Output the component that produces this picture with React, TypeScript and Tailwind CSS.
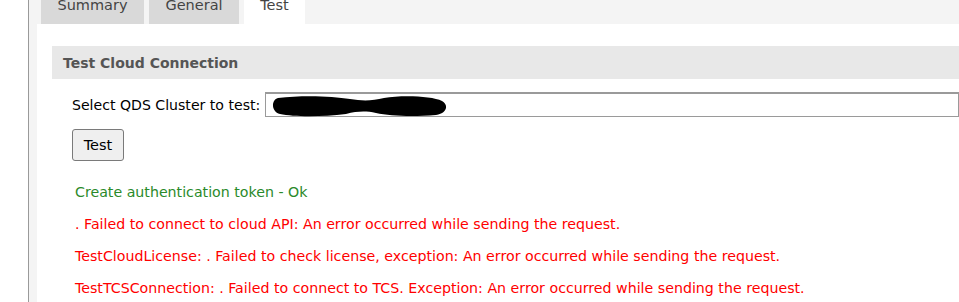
import React from 'react';

const tabs = [
  { label: 'Summary', width: 'w-[103px]', active: false },
  { label: 'General', width: 'w-[90px]', active: false },
  { label: 'Test', width: 'w-[61px]', active: true },
];

const results = [
  { ok: true, text: 'Create authentication token - Ok' },
  { ok: false, text: '. Failed to connect to cloud API: An error occurred while sending the request.' },
  { ok: false, text: 'TestCloudLicense: . Failed to check license, exception: An error occurred while sending the request.' },
  { ok: false, text: 'TestTCSConnection: . Failed to connect to TCS. Exception: An error occurred while sending the request.' },
];

function Redaction() {
  return (
    <svg width="176" height="22" viewBox="0 0 176 22" className="absolute left-[6px] top-[1px]">
      <path
        d="M6 3 C30 0 60 1 78 4 C90 6 100 6 112 3 C130 0 160 1 170 6 C177 10 175 18 164 20 C140 22 118 21 104 18 C94 16 86 16 74 19 C50 22 22 22 8 19 C-1 17 -1 5 6 3 Z"
        fill="#000"
      />
    </svg>
  );
}

export default function App() {
  return (
    <div className="flex h-[302px] w-full overflow-hidden bg-white font-['DejaVu_Sans',Verdana,sans-serif]">
      <div className="w-[28px] shrink-0 bg-white" />
      <div className="flex min-w-0 flex-1 flex-col border-l border-[#9a9a9a] bg-[#f4f4f4] pl-[8px]">
        <div className="-mt-[10px] flex h-[34px] shrink-0 items-stretch gap-[5px] pl-[4px]">
          {tabs.map((t) => (
            <div
              key={t.label}
              className={`${t.width} flex items-start justify-center pt-[5px] text-[14.5px] text-[#444] ${
                t.active ? 'bg-white' : 'bg-[#d9d9d9]'
              }`}
            >
              {t.label}
            </div>
          ))}
        </div>
        <div className="flex flex-1 flex-col bg-white pl-[15px] pt-[22px]">
          <div className="flex h-[33px] items-center bg-[#e8e8e8] pl-[11px] pt-[2px] text-[14px] font-bold text-[#555]">
            Test Cloud Connection
          </div>
          <div className="flex items-center pl-[20px] pt-[13px]">
            <span className="w-[193px] shrink-0 pt-[2px] text-[14.1px] text-black">Select QDS Cluster to test:</span>
            <div className="relative h-[25px] flex-1 border border-t-2 border-[#9a9a9a] bg-white">
              <Redaction />
            </div>
          </div>
          <div className="pl-[20px] pt-[12px]">
            <button className="h-[32px] w-[52px] rounded-[3px] border border-[#7a7a7a] bg-[#efefef] pt-[2px] text-[14.5px] text-black">
              Test
            </button>
          </div>
          <div className="flex flex-col pl-[23px] pt-[15px]">
            {results.map((r, i) => (
              <div
                key={i}
                className={`h-[32px] leading-[32px] text-[14.2px] ${r.ok ? 'text-[#2a8a2a]' : 'text-[#ff0000]'}`}
              >
                {r.text}
              </div>
            ))}
          </div>
        </div>
      </div>
    </div>
  );
}
